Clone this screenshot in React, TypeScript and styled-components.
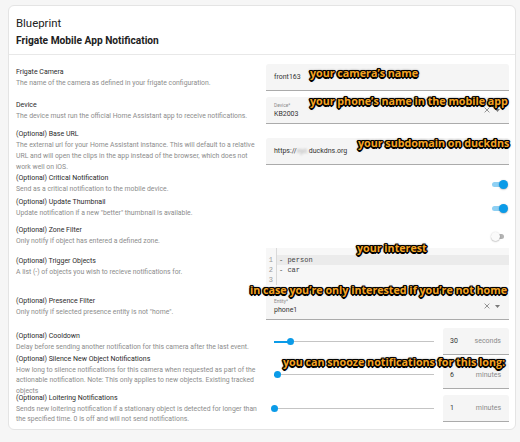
import styled, { createGlobalStyle } from "styled-components";

const GlobalStyle = createGlobalStyle`
  html, body {
    margin: 0;
    padding: 0;
    background: #f6f6f6;
  }
  body {
    font-family: Roboto, "Liberation Sans", sans-serif;
  }
  * {
    box-sizing: border-box;
  }
`;

const Page = styled.div`
  position: relative;
  width: 520px;
  height: 442px;
  padding: 5px 4px 0 8px;
`;

const Card = styled.div`
  background: #fff;
  border: 1px solid #e4e4e4;
  border-radius: 6px;
  height: 425px;
  overflow: hidden;
`;

const Header = styled.header`
  padding: 10px 7px 6px;
  border-bottom: 1px solid #e8e8e8;
`;

const Kicker = styled.div`
  font-size: 11.4px;
  line-height: 14px;
  color: #212121;
`;

const Title = styled.h1`
  margin: 4px 0 0;
  font-size: 10.2px;
  line-height: 14px;
  font-weight: 700;
  color: #212121;
`;

const Body = styled.div`
  display: flex;
  flex-direction: column;
  padding: 0 6px 0 7px;
`;

const Row = styled.div<{ $top: number }>`
  display: grid;
  grid-template-columns: 1fr 243px;
  column-gap: 4px;
  align-items: center;
  margin-top: ${(p) => p.$top}px;
`;

const Info = styled.div<{ $lh: number }>`
  line-height: ${(p) => p.$lh}px;
`;

const Label = styled.div`
  font-size: 7px;
  color: #2b2b2b;
`;

const Desc = styled.div`
  font-size: 6.85px;
  color: #8c8c8c;
`;

const Field = styled.div`
  display: flex;
  align-items: center;
  height: 27px;
  padding: 0 8px;
  background: #f5f5f5;
  border-bottom: 1px solid #ababab;
  border-radius: 3px 3px 0 0;
  font-size: 7px;
  color: #333;
`;

const Stack = styled.div`
  display: flex;
  flex-direction: column;
  flex: 1;
`;

const FloatLabel = styled.span`
  font-size: 4.8px;
  line-height: 7px;
  color: #8a8a8a;
`;

const Value = styled.span`
  font-size: 7px;
  line-height: 10px;
  color: #333;
`;

const Blurred = styled.span`
  color: #aaa;
  filter: blur(1.3px);
`;

const Icons = styled.div`
  display: flex;
  align-items: center;
  gap: 5px;
  margin-right: 1px;
  color: #7a7a7a;
`;

const Switch = styled.span<{ $on: boolean }>`
  position: relative;
  justify-self: end;
  width: 12px;
  height: 5px;
  margin-right: 5px;
  border-radius: 3px;
  background: ${(p) => (p.$on ? "#8fd0f3" : "#b4b4b4")};
`;

const Knob = styled.span<{ $on: boolean }>`
  position: absolute;
  top: -2px;
  left: ${(p) => (p.$on ? "7px" : "-1px")};
  width: 9px;
  height: 9px;
  border-radius: 50%;
  background: ${(p) => (p.$on ? "#0b9be8" : "#fafafa")};
  box-shadow: 0 0.5px 1.5px rgba(0, 0, 0, 0.35);
`;

const Editor = styled.div`
  display: flex;
  height: 37px;
  background: #f7f7f7;
  font-family: "Liberation Mono", "DejaVu Sans Mono", monospace;
  font-size: 7px;
  line-height: 10px;
`;

const Gutter = styled.div`
  width: 11px;
  padding: 7px 3px 0 0;
  border-right: 1px solid #d9d9d9;
  text-align: right;
  color: #9a9a9a;
`;

const Code = styled.div`
  flex: 1;
  padding-top: 7px;
  color: #444;
`;

const CodeLine = styled.div<{ $active?: boolean }>`
  padding-left: 2px;
  height: 10px;
  background: ${(p) => (p.$active ? "#ebebeb" : "transparent")};
`;

const SliderRow = styled.div`
  display: flex;
  align-items: center;
`;

const SliderArea = styled.div`
  flex: 1;
  padding: 0 9px 0 8px;
`;

const Track = styled.div`
  position: relative;
  height: 1px;
  background: #c4c4c4;
`;

const Fill = styled.div`
  height: 2px;
  margin-top: -0.5px;
  background: #0b9be8;
`;

const Thumb = styled.span`
  position: absolute;
  top: -3px;
  width: 7px;
  height: 7px;
  margin-left: -3.5px;
  border-radius: 50%;
  background: #0b9be8;
`;

const NumberField = styled(Field)`
  width: 66px;
  padding: 0 8px 0 7px;
  justify-content: space-between;
`;

const Suffix = styled.span`
  color: #8a8a8a;
`;

const Note = styled.div<{ $x: number; $y: number }>`
  position: absolute;
  left: ${(p) => p.$x}px;
  top: ${(p) => p.$y}px;
  white-space: nowrap;
  font-family: "Open Sans", Lato, sans-serif;
  font-weight: 700;
  font-size: 10.7px;
  line-height: 12px;
  color: #f4a322;
  text-shadow: -1px -1px 0 #000, 1px -1px 0 #000, -1px 1px 0 #000,
    1px 1px 0 #000, 0 -1.5px 0 #000, 0 1.5px 0 #000, -1.5px 0 0 #000,
    1.5px 0 0 #000, 0 0 3px #000;
`;

const Clear = () => (
  <svg width="6" height="6" viewBox="0 0 6 6">
    <path d="M0.6 0.6 L5.4 5.4 M5.4 0.6 L0.6 5.4" stroke="currentColor" strokeWidth="0.8" />
  </svg>
);

const Caret = () => (
  <svg width="5" height="3" viewBox="0 0 5 3">
    <path d="M0 0 H5 L2.5 3 Z" fill="currentColor" />
  </svg>
);

type Setting = { label: string; desc: string; lh?: number };

const InfoBlock = ({ label, desc, lh = 11 }: Setting) => (
  <Info $lh={lh}>
    <Label>{label}</Label>
    <Desc>{desc}</Desc>
  </Info>
);

const Slider = ({ pct, value, unit }: { pct: number; value: string; unit: string }) => (
  <SliderRow>
    <SliderArea>
      <Track>
        <Fill style={{ width: `${pct}%` }} />
        <Thumb style={{ left: `${pct}%` }} />
      </Track>
    </SliderArea>
    <NumberField>
      <span>{value}</span>
      <Suffix>{unit}</Suffix>
    </NumberField>
  </SliderRow>
);

export default function App() {
  return (
    <Page>
      <GlobalStyle />
      <Card>
        <Header>
          <Kicker>Blueprint</Kicker>
          <Title>Frigate Mobile App Notification</Title>
        </Header>
        <Body>
          <Row $top={9}>
            <InfoBlock
              label="Frigate Camera"
              desc="The name of the camera as defined in your frigate configuration."
            />
            <Field>front163</Field>
          </Row>
          <Row $top={6}>
            <InfoBlock
              label="Device"
              desc="The device must run the official Home Assistant app to receive notifications."
            />
            <Field>
              <Stack>
                <FloatLabel>Device*</FloatLabel>
                <Value>KB2003</Value>
              </Stack>
              <Icons>
                <Clear />
                <Caret />
              </Icons>
            </Field>
          </Row>
          <Row $top={5}>
            <InfoBlock
              label="(Optional) Base URL"
              desc="The external url for your Home Assistant instance. This will default to a relative URL and will open the clips in the app instead of the browser, which does not work well on iOS."
            />
            <Field>
              https://<Blurred>xyz.</Blurred>duckdns.org
            </Field>
          </Row>
          <Row $top={0}>
            <InfoBlock
              label="(Optional) Critical Notification"
              desc="Send as a critical notification to the mobile device."
            />
            <Switch $on>
              <Knob $on />
            </Switch>
          </Row>
          <Row $top={2}>
            <InfoBlock
              label="(Optional) Update Thumbnail"
              desc='Update notification if a new "better" thumbnail is available.'
            />
            <Switch $on>
              <Knob $on />
            </Switch>
          </Row>
          <Row $top={6}>
            <InfoBlock
              label="(Optional) Zone Filter"
              desc="Only notify if object has entered a defined zone."
            />
            <Switch $on={false}>
              <Knob $on={false} />
            </Switch>
          </Row>
          <Row $top={1}>
            <InfoBlock
              label="(Optional) Trigger Objects"
              desc="A list (-) of objects you wish to recieve notifications for."
            />
            <Editor>
              <Gutter>
                <div>1</div>
                <div>2</div>
                <div>3</div>
              </Gutter>
              <Code>
                <CodeLine $active>- person</CodeLine>
                <CodeLine>- car</CodeLine>
                <CodeLine />
              </Code>
            </Editor>
          </Row>
          <Row $top={8}>
            <InfoBlock
              label="(Optional) Presence Filter"
              desc='Only notify if selected presence entity is not "home".'
            />
            <Field>
              <Stack>
                <FloatLabel>Entity*</FloatLabel>
                <Value>phone1</Value>
              </Stack>
              <Icons>
                <Clear />
                <Caret />
              </Icons>
            </Field>
          </Row>
          <Row $top={8}>
            <InfoBlock
              label="(Optional) Cooldown"
              desc="Delay before sending another notification for this camera after the last event."
            />
            <Slider pct={10} value="30" unit="seconds" />
          </Row>
          <Row $top={-1}>
            <InfoBlock
              lh={10.5}
              label="(Optional) Silence New Object Notifications"
              desc="How long to silence notifications for this camera when requested as part of the actionable notification. Note: This only applies to new objects. Existing tracked objects"
            />
            <Slider pct={2} value="6" unit="minutes" />
          </Row>
          <Row $top={-3}>
            <InfoBlock
              lh={10.5}
              label="(Optional) Loitering Notifications"
              desc="Sends new loitering notification if a stationary object is detected for longer than the specified time. 0 is off and will not send notifications."
            />
            <Slider pct={0} value="1" unit="minutes" />
          </Row>
        </Body>
      </Card>
      <Note $x={310} $y={67}>your camera’s name</Note>
      <Note $x={310} $y={95}>your phone’s name in the mobile app</Note>
      <Note $x={358} $y={137}>your subdomain on duckdns</Note>
      <Note $x={357} $y={242}>your interest</Note>
      <Note $x={250} $y={284}>in case you’re only interested if you’re not home</Note>
      <Note $x={283} $y={356}>you can snooze notifications for this long:</Note>
    </Page>
  );
}
